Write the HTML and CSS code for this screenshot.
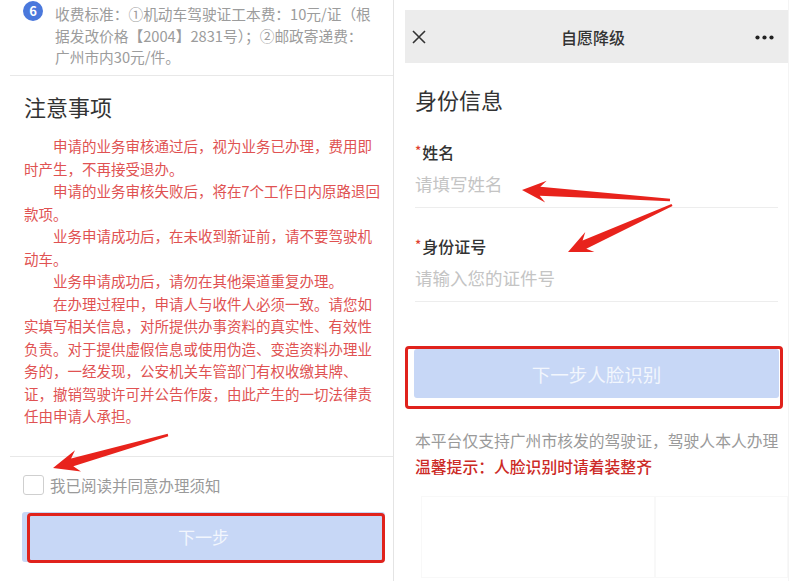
FILE: index.html
```html
<!DOCTYPE html>
<html lang="zh-CN">
<head>
<meta charset="utf-8">
<title>自愿降级</title>
<link rel="stylesheet" href="styles.css">
</head>
<body>
<div class="page">
  <section class="panel panel-left">
    <div class="step">
      <span class="step-num">6</span>
      <p class="step-text">收费标准：①机动车驾驶证工本费：10元/证（根<br>据发改价格【2004】2831号）；②邮政寄递费：<br>广州市内30元/件。</p>
    </div>
    <div class="notice-section">
      <h2 class="notice-title">注意事项</h2>
      <div class="notice">
        <p>申请的业务审核通过后，视为业务已办理，费用即时产生，不再接受退办。</p>
        <p>申请的业务审核失败后，将在7个工作日内原路退回款项。</p>
        <p>业务申请成功后，在未收到新证前，请不要驾驶机动车。</p>
        <p>业务申请成功后，请勿在其他渠道重复办理。</p>
        <p>在办理过程中，申请人与收件人必须一致。请您如实填写相关信息，对所提供办事资料的真实性、有效性负责。对于提供虚假信息或使用伪造、变造资料办理业务的，一经发现，公安机关车管部门有权收缴其牌、证，撤销驾驶许可并公告作废，由此产生的一切法律责任由申请人承担。</p>
      </div>
    </div>
    <label class="agree"><span class="checkbox"></span><span class="agree-text">我已阅读并同意办理须知</span></label>
    <button class="btn btn-left" type="button">下一步</button>
  </section>

  <section class="panel panel-right">
    <header class="nav">
      <svg class="nav-close" width="14" height="14" viewBox="0 0 14 14"><path d="M1 1 L13 13 M13 1 L1 13" stroke="#333" stroke-width="1.6" fill="none"/></svg>
      <span class="nav-title">自愿降级</span>
      <svg class="nav-more" width="19" height="5" viewBox="0 0 19 5"><circle cx="2.5" cy="2.5" r="2.1" fill="#222"/><circle cx="9.5" cy="2.5" r="2.1" fill="#222"/><circle cx="16.5" cy="2.5" r="2.1" fill="#222"/></svg>
    </header>
    <div class="form">
      <h2 class="form-title">身份信息</h2>
      <div class="field">
        <div class="field-label"><span class="req">*</span>姓名</div>
        <div class="field-input">请填写姓名</div>
      </div>
      <div class="field">
        <div class="field-label"><span class="req">*</span>身份证号</div>
        <div class="field-input">请输入您的证件号</div>
      </div>
      <button class="btn btn-right" type="button">下一步人脸识别</button>
      <p class="tip">本平台仅支持广州市核发的驾驶证，驾驶人本人办理</p>
      <p class="tip tip-warn">温馨提示：人脸识别时请着装整齐</p>
      <div class="cards">
        <div class="card card-main"></div>
        <div class="card card-side"></div>
      </div>
    </div>
  </section>

  <svg class="arrows" width="800" height="581" viewBox="0 0 800 581">
    <polygon fill="#e8231c" points="168.3,436.2 73.3,466.3 81.0,471.4 53,468 75.0,450.3 71.1,458.6 167.7,433.8"/>
    <polygon fill="#e8231c" points="669.9,201.2 539.7,195.7 545.2,202.6 522,190 546.7,180.7 540.3,186.7 670.1,198.8"/>
    <polygon fill="#e8231c" points="672.5,206.1 586.3,248.7 594.4,252.1 568,252 585.3,232.1 582.6,240.5 671.5,203.9"/>
  </svg>
</div>
</body>
</html>
```

FILE: styles.css
```css
* {
  box-sizing: border-box;
}

html, body {
  margin: 0;
  padding: 0;
  background: #ffffff;
}

body {
  font-family: "Noto Sans CJK SC", "Noto Sans", sans-serif;
  color: #333;
}

.page {
  position: relative;
  width: 800px;
  height: 581px;
  overflow: hidden;
  display: flex;
  gap: 11px;
}

.panel {
  height: 581px;
}

/* ---------- left panel ---------- */
.panel-left {
  width: 394px;
  border-right: 1px solid #e4e4e4;
}

.step {
  display: flex;
  align-items: flex-start;
  gap: 12px;
  margin-left: 10px;
  padding: 3px 0 7px 13px;
  border-bottom: 1px solid #e8e8e8;
}

.step-num {
  flex: none;
  width: 20px;
  height: 20px;
  margin-top: -2px;
  border-radius: 50%;
  background: #4a78dc;
  color: #fff;
  font-size: 13px;
  font-weight: 700;
  line-height: 20px;
  text-align: center;
}

.step-text {
  margin: 0;
  font-size: 14.7px;
  line-height: 21.5px;
  color: #9c9c9c;
  white-space: nowrap;
}

.notice-section {
  margin-left: 10px;
  padding: 15px 0 28px 14px;
  border-bottom: 1px solid #e8e8e8;
}

.notice-title {
  margin: 0;
  font-size: 22px;
  line-height: 30px;
  font-weight: 400;
  color: #333;
}

.notice {
  margin-top: 14.5px;
  width: 359px;
  font-size: 14.5px;
  line-height: 22.5px;
  color: #e05252;
}

.notice p {
  margin: 0;
  text-indent: 2em;
}

.agree {
  display: flex;
  align-items: center;
  gap: 6px;
  margin: 18px 0 0 23px;
  height: 20px;
}

.checkbox {
  width: 21px;
  height: 20px;
  border: 1px solid #cfcfcf;
  border-radius: 3px;
  background: #fff;
}

.agree-text {
  font-size: 15.5px;
  color: #9a9a9a;
}

.btn {
  display: block;
  position: relative;
  border: 0;
  border-radius: 3px;
  background: #c7d7f6;
  color: #f2f6fd;
  font-family: inherit;
  padding: 0;
}

.btn::after {
  content: "";
  position: absolute;
  border: 3px solid #e0221c;
  border-radius: 4px;
}

.btn-left {
  margin: 17px 0 0 22px;
  width: 363px;
  height: 50px;
  font-size: 17px;
}

.btn-left::after {
  left: 5px;
  top: 1px;
  right: 0;
  bottom: -1px;
}

/* ---------- right panel ---------- */
.panel-right {
  width: 384px;
  border-right: 1px solid #f4f4f4;
}

.nav {
  margin-top: 10px;
  height: 53px;
  background: #ececec;
  display: grid;
  grid-template-columns: 1fr auto 1fr;
  align-items: center;
  padding: 0 14px 0 7px;
}

.nav-close {
  justify-self: start;
}

.nav-more {
  justify-self: end;
  margin-top: 2px;
}

.nav-title {
  font-size: 16px;
  font-weight: 500;
  color: #333;
}

.form {
  padding: 0 10px;
}

.form-title {
  margin: 21px 0 0;
  font-size: 22px;
  line-height: 30px;
  font-weight: 400;
  color: #333;
}

.field {
  padding: 26px 0 11px;
  border-bottom: 1px solid #ededed;
}

.field-label {
  font-size: 16px;
  line-height: 22px;
  font-weight: 500;
  color: #333;
}

.req {
  color: #e0402e;
  font-size: 13px;
  vertical-align: 3px;
  margin-right: 1px;
}

.field-input {
  margin-top: 9px;
  font-size: 17.5px;
  line-height: 24px;
  color: #c4c4c4;
}

.btn-right {
  margin: 47px 0 0 -1px;
  width: 365px;
  height: 49px;
  font-size: 18.5px;
}

.btn-right::after {
  left: -9px;
  top: -3px;
  right: -4px;
  bottom: -11px;
}

.tip {
  margin: 30px 0 0;
  font-size: 15.8px;
  line-height: 26px;
  color: #9a9a9a;
  white-space: nowrap;
}

.tip-warn {
  margin-top: 0;
  color: #cc2a26;
  font-weight: 500;
}

.cards {
  display: flex;
  margin: 16px -10px 0 6px;
}

.card {
  height: 82px;
  border: 1px solid #f8f8f8;
}

.card-main {
  flex: 235;
}

.card-side {
  flex: 133;
}

.arrows {
  position: absolute;
  left: 0;
  top: 0;
  pointer-events: none;
}
```
